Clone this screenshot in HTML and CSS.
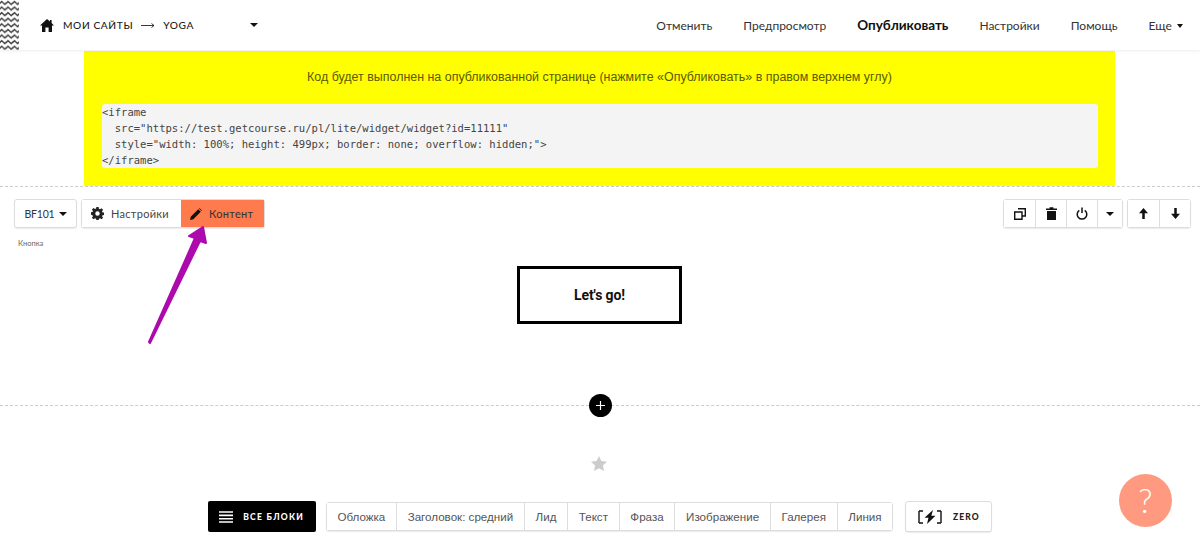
FILE: index.html
```html
<!DOCTYPE html>
<html lang="ru">
<head>
<meta charset="utf-8">
<title>Редактор страницы</title>
<link rel="stylesheet" href="styles.css">
</head>
<body>
<header class="topbar">
  <svg class="zigzag" width="19" height="50" viewBox="0 0 19 50">
    <defs><pattern id="zz" width="6.4" height="5.6" patternUnits="userSpaceOnUse"><path d="M-.5 3.800 1.600 1.500 4.800 4.500 6.900 2.200" fill="none" stroke="#333" stroke-width="1.300"/></pattern></defs>
    <rect width="19" height="50" fill="url(#zz)"/>
  </svg>
  <div class="crumbs">
    <svg class="home" width="14" height="13" viewBox="0 0 14 13"><path d="M7 0 0 6.500h2V13h3.400V8.600h3.200V13H12V6.500h2L11.600 4V1H10v1.500z" fill="#111"/></svg>
    <span class="crumb">МОИ САЙТЫ</span>
    <svg class="crumb-arrow" width="14" height="7" viewBox="0 0 14 7"><path d="M0 3.500h13M10.500 1.500l2.500 2-2.500 2" fill="none" stroke="#222" stroke-width=".9"/></svg>
    <span class="crumb">YOGA</span>
    <span class="caret crumb-caret"></span>
  </div>
  <nav class="menu">
    <a>Отменить</a>
    <a>Предпросмотр</a>
    <a class="strong">Опубликовать</a>
    <a>Настройки</a>
    <a>Помощь</a>
    <a>Еще <span class="caret small"></span></a>
  </nav>
</header>

<main>
  <section class="code-block">
    <p class="code-note">Код будет выполнен на опубликованной странице (нажмите «Опубликовать» в правом верхнем углу)</p>
    <pre class="code">&lt;iframe
  src="https://test.getcourse.ru/pl/lite/widget/widget?id=11111"
  style="width: 100%; height: 499px; border: none; overflow: hidden;"&gt;
&lt;/iframe&gt;</pre>
  </section>

  <section class="block">
    <div class="tools">
      <div class="tools-left">
        <button class="btn id-btn">BF101 <span class="caret"></span></button>
        <div class="group">
          <button class="btn settings">
            <svg width="13" height="13" viewBox="0 0 14 14"><path d="M5.800 0h2.400l.3 1.900 1.200.5 1.600-1.100 1.700 1.700-1.100 1.600.5 1.200 1.900.3v2.400l-1.900.3-.5 1.200 1.100 1.600-1.700 1.700-1.600-1.100-1.200.5-.3 1.900H5.800l-.3-1.900-1.200-.5-1.600 1.100-1.700-1.700 1.100-1.600-.5-1.200L-.3 8.200V5.800l1.900-.3.5-1.200L1 2.700 2.700 1l1.600 1.100 1.200-.5zM7 4.600a2.400 2.400 0 1 0 0 4.800 2.400 2.400 0 0 0 0-4.800z" fill="#222" fill-rule="evenodd"/></svg>
            Настройки
          </button>
          <button class="btn accent">
            <svg width="12" height="12" viewBox="0 0 13 13"><path d="M0 13l.8-3.600L8.900 1.300l2.800 2.800-8.100 8.100zM9.700.5l.5-.5L13 2.800l-.5.5z" fill="#111"/></svg>
            Контент
          </button>
        </div>
      </div>
      <div class="tools-right">
        <div class="group">
          <button class="btn icon">
            <svg width="12" height="12" viewBox="0 0 12 12"><path d="M4 .7h7.300V8H8.600M.7 4H8v7.300H.7z" fill="none" stroke="#111" stroke-width="1.400"/></svg>
          </button>
          <button class="btn icon">
            <svg width="11" height="13" viewBox="0 0 11 13"><path d="M0 1.500h3.600V.3h3.800v1.200H11v1.400H0zM1 4h9v9H1z" fill="#111"/></svg>
          </button>
          <button class="btn icon">
            <svg width="12" height="13" viewBox="0 0 12 13"><path d="M3.300 3.300a4.800 4.800 0 1 0 5.400 0M6 .5v5.600" fill="none" stroke="#111" stroke-width="1.500"/></svg>
          </button>
          <button class="btn icon narrow"><span class="caret"></span></button>
        </div>
        <div class="group">
          <button class="btn icon">
            <svg width="9" height="11" viewBox="0 0 10 12"><path d="M5 0 10 5.600H6.400V12H3.600V5.600H0z" fill="#111"/></svg>
          </button>
          <button class="btn icon">
            <svg width="9" height="11" viewBox="0 0 10 12"><path d="M5 12 0 6.400h3.600V0h2.800v6.400H10z" fill="#111"/></svg>
          </button>
        </div>
      </div>
    </div>
    <div class="block-name">Кнопка</div>
    <div class="cta-wrap"><a class="cta">Let's go!</a></div>
    <svg class="pointer" width="62" height="120" viewBox="0 0 62 120"><path d="M2 118 48 14 42 12 56 3 59 19 53 17 3 119z" fill="#ad0aad" stroke="#ad0aad" stroke-width="2" stroke-linejoin="round"/></svg>
  </section>

  <section class="add-row">
    <button class="plus" aria-label="Добавить">
      <svg width="9" height="9" viewBox="0 0 10 10"><path d="M5 0v10M0 5h10" stroke="#fff" stroke-width="1.300"/></svg>
    </button>
    <svg class="star" width="16" height="15" viewBox="0 0 16 15"><path d="M8 0l2.400 5 5.600.7-4.100 3.800 1.100 5.500L8 12.300 3 15l1.100-5.500L0 5.700 5.600 5z" fill="#ccc"/></svg>
    <div class="palette">
      <button class="all-blocks">
        <svg width="14" height="12" viewBox="0 0 14 12"><path d="M0 1h14M0 4.400h14M0 7.700h14M0 11h14" stroke="#fff" stroke-width="1.600"/></svg>
        ВСЕ БЛОКИ
      </button>
      <div class="group palette-group">
        <button class="btn">Обложка</button>
        <button class="btn">Заголовок: средний</button>
        <button class="btn">Лид</button>
        <button class="btn">Текст</button>
        <button class="btn">Фраза</button>
        <button class="btn">Изображение</button>
        <button class="btn">Галерея</button>
        <button class="btn">Линия</button>
      </div>
      <button class="btn zero">
        <svg width="24" height="14" viewBox="0 0 24 14"><path d="M1 1h4M1 1v12M1 13h4M23 1h-4M23 1v12M23 13h-4" fill="none" stroke="#111" stroke-width="1.400"/><path d="M15 0 6.500 7.800h4L9 14l8.500-8.200h-4.200z" fill="#111"/></svg>
        ZERO
      </button>
    </div>
  </section>
</main>

<button class="help" aria-label="Помощь">?</button>
</body>
</html>
```
FILE: styles.css
```css
* { box-sizing: border-box; }
html, body { margin: 0; padding: 0; height: 545px; overflow: hidden; background: #fff; }
body { font-family: "Liberation Sans", Arial, sans-serif; color: #222; position: relative; }
button { font: inherit; color: inherit; margin: 0; }
svg { flex: none; }

.topbar {
  height: 50px; display: flex; align-items: center; background: #fff;
  box-shadow: 0 1px 3px rgba(0,0,0,.08); position: relative; z-index: 2;
}
.zigzag { align-self: flex-start; }
.crumbs { display: flex; align-items: center; margin-left: 21px; width: 218px; }
.home { margin-right: 9px; }
.crumb { font-family: Lato, sans-serif; font-size: 10.200px; font-weight: 500; letter-spacing: .6px; color: #222; white-space: nowrap; }
.crumb-arrow { margin: 0 8px 0 8px; }
.caret {
  display: inline-block; width: 0; height: 0; vertical-align: middle;
  border-left: 4px solid transparent; border-right: 4px solid transparent; border-top: 4px solid #111;
}
.caret.small { border-left-width: 3.500px; border-right-width: 3.500px; margin-left: 2px; }
.crumb-caret { margin-left: auto; }
.menu { margin-left: auto; display: flex; align-items: center; gap: 31px; padding-right: 17px; font-family: Lato, sans-serif; font-size: 12px; color: #333; }
.menu a { white-space: nowrap; }
.menu .strong { font-weight: 700; font-size: 13.500px; color: #111; }

.code-block {
  width: 1031px; height: 135px; margin: 1px 0 0 84px; background: #ff0; padding-top: 18px;
}
.code-note { margin: 0; text-align: center; font-size: 12.450px; line-height: 16px; color: #5a5a00; }
.code {
  margin: 19px 17px 0 18px; height: 64px; padding: 0; background: #f4f4f4; border-radius: 3px;
  font-family: "DejaVu Sans Mono", monospace; font-size: 10.550px; line-height: 16px; color: #444;
}

.block { height: 219px; border-top: 1px dashed #ccc; position: relative; padding: 12px 9px 0 14px; }
.tools { display: flex; justify-content: space-between; }
.tools-left { display: flex; gap: 4px; }
.tools-right { display: flex; gap: 4px; }
.group { display: flex; border: 1px solid #ddd; border-radius: 3px; box-shadow: 0 1px 1px rgba(0,0,0,.08); background: #fff; }
.btn {
  height: 29px; padding: 0; background: #fff; border: 0; display: flex; align-items: center; justify-content: center;
  font-family: Lato, sans-serif; font-size: 11px; letter-spacing: .3px; color: #444; white-space: nowrap;
}
.group .btn { height: 27px; border-left: 1px solid #ddd; border-radius: 0; }
.group .btn:first-child { border-left: 0; }
.id-btn { width: 63px; border: 1px solid #ddd; border-radius: 3px; box-shadow: 0 1px 1px rgba(0,0,0,.08); gap: 4px; color: #333; font-size: 10.500px; letter-spacing: -.2px; }
.settings { width: 99px; justify-content: flex-start; padding-left: 9px; gap: 7px; }
.group .btn.accent { width: 83px; border-left: 0; background: #ff7a4c; color: #333; justify-content: flex-start; padding-left: 9px; gap: 7px; }
.btn.icon { width: 31px; }
.btn.icon.narrow { width: 25px; }
.block-name { font-family: Lato, sans-serif; font-size: 7.500px; color: #666; margin: 11px 0 0 4px; line-height: 10px; }
.cta-wrap { display: flex; justify-content: center; margin-top: 17px; padding-right: 6px; }
.cta {
  width: 165px; height: 58px; border: 3px solid #000; display: flex; align-items: center; justify-content: center;
  font-family: Roboto, sans-serif; font-weight: 700; font-size: 14px; color: #111; letter-spacing: -.1px;
}
.pointer { position: absolute; left: 147px; top: 37px; }

.add-row { border-top: 1px dashed #ccc; position: relative; display: flex; flex-direction: column; align-items: center; }
.plus {
  position: absolute; left: 589px; top: -12px; width: 23px; height: 23px; border-radius: 50%; border: 0; padding: 0;
  background: #000; display: flex; align-items: center; justify-content: center;
}
.star { margin: 50px 3px 0 0; }
.palette { display: flex; align-items: center; margin-top: 30px; gap: 10px; }
.all-blocks {
  width: 108px; height: 31px; background: #000; color: #fff; border: 0; border-radius: 2px; display: flex; align-items: center; justify-content: center; gap: 10px;
  font-family: Lato, sans-serif; font-weight: 900; font-size: 8.500px; letter-spacing: 1.300px;
}
.palette-group .btn { padding: 0 10.700px; font-family: "Liberation Sans", sans-serif; font-size: 11.600px; letter-spacing: 0; color: #555; }
.zero {
  width: 87px; height: 31px; border: 1px solid #ddd; border-radius: 3px; box-shadow: 0 1px 1px rgba(0,0,0,.08); gap: 11px;
  font-family: Lato, sans-serif; font-weight: 900; font-size: 8.500px; letter-spacing: 1.100px; color: #222; margin-left: 2px;
}

.help {
  position: absolute; left: 1119px; top: 474px; width: 53px; height: 53px; border-radius: 50%; border: 0; padding: 0;
  background: #ff9a80; color: #fff; font-family: Lato, sans-serif; font-weight: 300; font-size: 33px; line-height: 53px;
}
```
